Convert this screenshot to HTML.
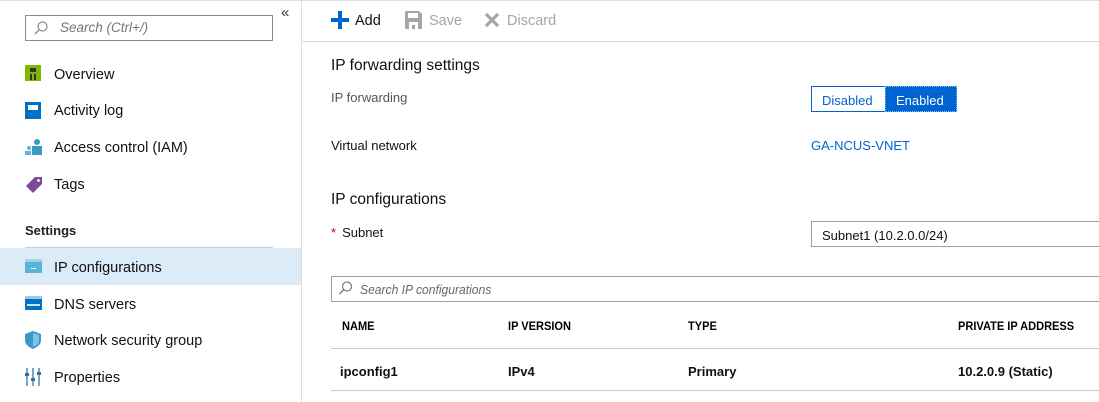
<!DOCTYPE html>
<html><head><meta charset="utf-8"><style>
*{box-sizing:border-box;margin:0;padding:0}
body{width:1099px;height:402px;overflow:hidden;background:#fff;font-family:"Liberation Sans",sans-serif;color:#000;position:relative}
.a{position:absolute;white-space:nowrap}
.mi{position:absolute;left:54px;font-size:14.5px;color:#111}
.ic{position:absolute;left:25px}
.th{position:absolute;font-size:12px;font-weight:bold;top:319px;transform:scaleX(.92);transform-origin:left}
.td{position:absolute;font-size:13px;font-weight:bold;top:364px;color:#111}
</style></head><body>
<div class="a" style="left:0;top:0;width:1099px;height:1px;background:#ddd"></div>
<div class="a" style="left:301px;top:0;width:1px;height:402px;background:#ddd"></div>
<div class="a" style="left:302px;top:41px;width:797px;height:1px;background:#d4d4d4"></div>
<!-- sidebar -->
<div class="a" style="left:25px;top:15px;width:248px;height:26px;border:1px solid #8a8a8a"></div>
<svg class="a" style="left:33px;top:20px" width="16" height="16"><circle cx="9.5" cy="6.5" r="4.5" fill="none" stroke="#888" stroke-width="1.2"/><line x1="6.3" y1="9.7" x2="2" y2="14" stroke="#888" stroke-width="1.3"/></svg>
<div class="a" style="left:60px;top:20px;font-size:13.5px;font-style:italic;color:#777">Search (Ctrl+/)</div>
<div class="a" style="left:281px;top:4px;font-size:15px;color:#333">«</div>
<svg class="ic a" style="top:65px" width="16" height="16"><rect width="16" height="16" fill="#7fba00"/><rect x="5" y="3" width="6" height="4" fill="#333"/><rect x="5" y="9" width="2" height="6" fill="#333"/><rect x="9" y="9" width="2" height="6" fill="#333"/></svg>
<div class="mi" style="top:67px">Overview</div>
<svg class="ic a" style="top:102px" width="16" height="17"><rect width="16" height="17" fill="#0072c6"/><rect x="3" y="3" width="10" height="5" fill="#fff"/></svg>
<div class="mi" style="top:103px">Activity log</div>
<svg class="ic a" style="top:138px" width="18" height="18"><circle cx="12" cy="4" r="3" fill="#3999c6"/><rect x="7" y="8" width="10" height="9" fill="#3999c6"/><circle cx="4" cy="10" r="2" fill="#59b4d9"/><rect x="0" y="13" width="6" height="4" fill="#59b4d9"/></svg>
<div class="mi" style="top:140px">Access control (IAM)</div>
<svg class="ic a" style="top:175px" width="18" height="18"><path d="M1 11 L10 2 L17 2 L17 9 L8 18 Z" fill="#804998"/><circle cx="13.5" cy="5.5" r="1.4" fill="#fff"/></svg>
<div class="mi" style="top:177px">Tags</div>
<div class="a" style="left:25px;top:223px;font-size:13px;font-weight:bold;color:#222">Settings</div>
<div class="a" style="left:25px;top:247px;width:248px;height:1px;background:#ccc"></div>
<div class="a" style="left:0;top:248px;width:301px;height:37px;background:#dcebf8"></div>
<svg class="ic a" style="top:259px" width="17" height="14"><rect width="17" height="14" fill="#59b4d9"/><rect y="0" width="17" height="3" fill="#a0d2ec"/><rect x="6" y="9" width="5" height="1" fill="#fff"/></svg>
<div class="mi" style="top:260px">IP configurations</div>
<svg class="ic a" style="top:296px" width="17" height="14"><rect width="17" height="14" fill="#0072c6"/><rect y="0" width="17" height="3" fill="#a0c8ec"/><rect x="2" y="8" width="13" height="2" fill="#fff" opacity=".8"/></svg>
<div class="mi" style="top:297px">DNS servers</div>
<svg class="ic a" style="top:331px" width="16" height="18"><path d="M8 0 L16 3 L16 9 C16 14 12 16 8 18 C4 16 0 14 0 9 L0 3 Z" fill="#3999c6"/><path d="M8 2 L14 4 L14 9 C14 13 11 15 8 16 Z" fill="#7fc4e6"/></svg>
<div class="mi" style="top:333px">Network security group</div>
<svg class="ic a" style="top:368px" width="16" height="18"><g fill="#7aa7c7"><rect x="1" y="0" width="2" height="18"/><rect x="7" y="0" width="2" height="18"/><rect x="13" y="0" width="2" height="18"/></g><g fill="#2f6e9e"><rect x="0" y="5" width="4" height="3"/><rect x="6" y="10" width="4" height="3"/><rect x="12" y="4" width="4" height="3"/></g></svg>
<div class="mi" style="top:370px">Properties</div>
<!-- toolbar -->
<svg class="a" style="left:331px;top:11px" width="18" height="18"><rect x="7" y="0" width="4" height="18" fill="#0063d1"/><rect x="0" y="7" width="18" height="4" fill="#0063d1"/></svg>
<div class="a" style="left:355px;top:13px;font-size:14.5px;color:#111">Add</div>
<svg class="a" style="left:405px;top:11px" width="17" height="18"><path d="M0 0H14L17 3V18H0Z" fill="#a6a6a6"/><rect x="3" y="2" width="10" height="5" fill="#fff"/><rect x="4" y="11" width="9" height="7" fill="#fff"/><rect x="7" y="14" width="3" height="4" fill="#a6a6a6"/></svg>
<div class="a" style="left:429px;top:13px;font-size:14.5px;color:#a6a6a6">Save</div>
<svg class="a" style="left:484px;top:12px" width="16" height="16"><path d="M2 2L14 14M14 2L2 14" stroke="#a6a6a6" stroke-width="3.2"/></svg>
<div class="a" style="left:507px;top:13px;font-size:14.5px;color:#a6a6a6">Discard</div>
<!-- content -->
<div class="a" style="left:331px;top:57px;font-size:15.5px;color:#111">IP forwarding settings</div>
<div class="a" style="left:331px;top:90px;font-size:13px;color:#555">IP forwarding</div>
<div class="a" style="left:811px;top:86px;width:146px;height:26px;border:1px solid #0063d1"></div>
<div class="a" style="left:822px;top:93px;font-size:13px;color:#0063d1">Disabled</div>
<div class="a" style="left:885px;top:86px;width:72px;height:26px;background:#0063d1;outline:1px dotted #6cf;outline-offset:-1px"></div>
<div class="a" style="left:896px;top:93px;font-size:13px;color:#fff">Enabled</div>
<div class="a" style="left:331px;top:138px;font-size:13px;color:#111">Virtual network</div>
<div class="a" style="left:811px;top:138px;font-size:13px;color:#0063d1">GA-NCUS-VNET</div>
<div class="a" style="left:331px;top:191px;font-size:15.5px;color:#111">IP configurations</div>
<div class="a" style="left:331px;top:225px;font-size:13px;color:#111"><span style="color:#c00;margin-right:6px">*</span>Subnet</div>
<div class="a" style="left:811px;top:221px;width:300px;height:26px;border:1px solid #a0a0a0"></div>
<div class="a" style="left:822px;top:228px;font-size:13px;color:#111">Subnet1 (10.2.0.0/24)</div>
<div class="a" style="left:331px;top:276px;width:780px;height:26px;border:1px solid #a0a0a0"></div>
<svg class="a" style="left:337px;top:280px" width="16" height="16"><circle cx="10" cy="6.5" r="4.5" fill="none" stroke="#777" stroke-width="1.2"/><line x1="6.8" y1="9.7" x2="2.5" y2="14" stroke="#777" stroke-width="1.3"/></svg>
<div class="a" style="left:360px;top:282px;font-size:13px;font-style:italic;color:#666;transform:scaleX(.93);transform-origin:left">Search IP configurations</div>
<div class="th" style="left:342px">NAME</div>
<div class="th" style="left:508px">IP VERSION</div>
<div class="th" style="left:688px">TYPE</div>
<div class="th" style="left:958px">PRIVATE IP ADDRESS</div>
<div class="a" style="left:331px;top:348px;width:768px;height:1px;background:#ccc"></div>
<div class="td" style="left:340px">ipconfig1</div>
<div class="td" style="left:508px">IPv4</div>
<div class="td" style="left:688px">Primary</div>
<div class="td" style="left:958px">10.2.0.9 (Static)</div>
<div class="a" style="left:331px;top:390px;width:768px;height:1px;background:#ccc"></div>
</body></html>
